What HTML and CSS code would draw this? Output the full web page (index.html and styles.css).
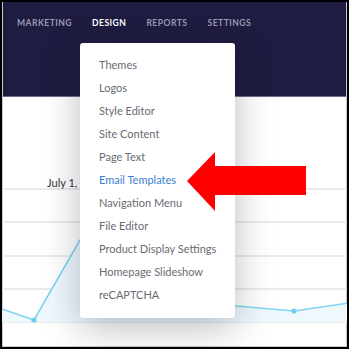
FILE: index.html
```html
<!DOCTYPE html>
<html>
<head>
<meta charset="utf-8">
<link rel="stylesheet" href="styles.css">
</head>
<body>
<div class="frame">
  <header class="topbar">
    <nav class="nav">
      <span class="nav-item">Marketing</span>
      <span class="nav-item active">Design</span>
      <span class="nav-item">Reports</span>
      <span class="nav-item">Settings</span>
    </nav>
  </header>
  <section class="chart">
    <svg class="chart-svg" width="345" height="250" viewBox="0 0 345 250">
      <g stroke="#e4e4e6" stroke-width="1.5">
        <line x1="0" y1="92" x2="345" y2="92"/>
        <line x1="0" y1="125" x2="345" y2="125"/>
        <line x1="0" y1="159" x2="345" y2="159"/>
        <line x1="0" y1="192" x2="345" y2="192"/>
        <line x1="0" y1="225" x2="345" y2="225"/>
      </g>
      <polygon fill="#eef8fd" points="0,212 32,223 78,143 120,100 180,180 234,209 292,214 347,206 347,225 0,225"/>
      <polyline fill="none" stroke="#7fd5f3" stroke-width="1.6" points="0,212 32,223 78,143 120,100 180,180 234,209 292,214 347,206"/>
      <circle cx="32" cy="223" r="2.6" fill="#6fcff2"/>
      <circle cx="292" cy="214" r="2.6" fill="#6fcff2"/>
    </svg>
    <div class="chart-label">July 1, 2019</div>
  </section>

  <ul class="dropdown">
    <li>Themes</li>
    <li>Logos</li>
    <li>Style Editor</li>
    <li>Site Content</li>
    <li>Page Text</li>
    <li class="current">Email Templates</li>
    <li>Navigation Menu</li>
    <li>File Editor</li>
    <li>Product Display Settings</li>
    <li>Homepage Slideshow</li>
    <li>reCAPTCHA</li>
  </ul>

  <svg class="arrow" width="122" height="62" viewBox="0 0 122 62">
    <polygon fill="#ff0000" points="0,30 28,1 28,15 119,15 119,44 28,44 28,60"/>
  </svg>
</div>
</body>
</html>
```

FILE: styles.css
```css
html, body {
  margin: 0;
  padding: 0;
  background: #ffffff;
}

.frame {
  position: relative;
  width: 345px;
  height: 345px;
  border: 2px solid #000;
  box-shadow: inset 0 0 0 1px #c9c8d2;
  overflow: hidden;
  background: #fff;
  font-family: "Lato", "Open Sans", sans-serif;
}

.topbar {
  height: 94px;
  background: #1f1c41;
  border-bottom: 1px solid #6d6a92;
  margin: 0 1px;
}

.nav {
  display: flex;
  gap: 20px;
  padding: 15px 0 0 14px;
}

.nav-item {
  font-size: 8.6px;
  font-weight: 700;
  letter-spacing: 0.45px;
  text-transform: uppercase;
  color: #9a98b0;
  line-height: 12px;
}

.nav-item.active {
  color: #ffffff;
}

.chart {
  position: relative;
  height: 250px;
}

.chart-svg {
  position: absolute;
  left: 0;
  top: 0;
}

.chart-label {
  position: relative;
  padding: 79px 0 0 45px;
  font-size: 11px;
  line-height: 14px;
  color: #2f2f3a;
}

.dropdown {
  position: absolute;
  left: 78px;
  top: 41px;
  width: 155px;
  margin: 0;
  padding: 9.5px 0 12.5px;
  list-style: none;
  background: #fff;
  border-radius: 3px;
  box-shadow: 0 10px 38px rgba(20, 20, 40, 0.28);
}

.dropdown li {
  padding-left: 19px;
  font-size: 11px;
  line-height: 23px;
  height: 23px;
  color: #6a6a72;
  white-space: nowrap;
}

.dropdown li.current {
  color: #3a80d2;
}

.arrow {
  position: absolute;
  left: 185px;
  top: 149px;
}
```
